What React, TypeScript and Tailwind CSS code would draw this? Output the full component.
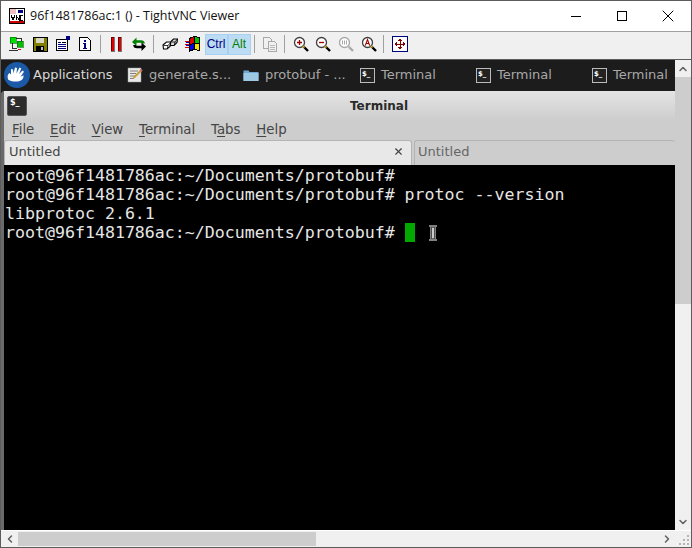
import { ReactNode } from "react";
import { ChevronDown, ChevronLeft, ChevronRight, ChevronUp, X } from "lucide-react";

// Icônes de la barre TightVNC, dessinées à la main sur une grille 16x16
function Svg({ children, className = "" }: { children: ReactNode; className?: string }) {
  return (
    <svg viewBox="0 0 16 16" className={`h-4 w-4 shrink-0 ${className}`} shapeRendering="crispEdges">
      {children}
    </svg>
  );
}

function IconConnections() {
  return (
    <Svg>
      <rect x="1" y="1" width="6" height="6" fill="#00e000" stroke="#006000" strokeWidth="0.6" />
      <rect x="8" y="5" width="6" height="6" fill="#00c000" stroke="#006000" strokeWidth="0.6" />
      <path d="M7 2h5v3M3 7v5h5M0 14h9" stroke="#000" strokeWidth="0.8" fill="none" />
      <rect x="9" y="13" width="3" height="1" fill="#e00000" />
    </Svg>
  );
}

function IconSave() {
  return (
    <Svg>
      <rect x="1" y="1" width="14" height="14" fill="#808000" stroke="#000" />
      <rect x="4" y="1.5" width="8" height="5" fill="#d8d8c0" />
      <rect x="4" y="10" width="8" height="5" fill="#000" />
      <rect x="9" y="11" width="2" height="3" fill="#c0c0c0" />
    </Svg>
  );
}

function IconOptions() {
  return (
    <Svg>
      <path d="M1.5 3.5h11v11h-11z" fill="#fff" stroke="#000" />
      <rect x="11" y="0" width="4" height="4" fill="#000080" />
      <path d="M3 6h3M3 8h8M3 10h8M3 12h8" stroke="#000080" />
      <path d="M7 6h4" stroke="#000" />
    </Svg>
  );
}

function IconInfo() {
  return (
    <Svg>
      <path d="M2.5 1.5h8l3 3v10h-11z" fill="#fff" stroke="#000" />
      <rect x="7" y="4" width="2" height="2" fill="#000080" />
      <path d="M6 7h3v5h1v1H6v-1h1V8H6z" fill="#000080" />
    </Svg>
  );
}

function IconPause() {
  return (
    <Svg>
      <rect x="3" y="1" width="3" height="14" fill="#e00000" stroke="#000" strokeWidth="0.5" />
      <rect x="10" y="1" width="3" height="14" fill="#e00000" stroke="#000" strokeWidth="0.5" />
    </Svg>
  );
}

function IconRefresh() {
  return (
    <svg viewBox="0 0 16 16" className="h-4 w-4 shrink-0">
      <path d="M1 6l4.500-4.500v2.700H10c2.500 0 3.800 1.300 3.800 3.300h-2.800c0-.6-.4-.8-1-.8H5.500v3.300z" fill="#008000" />
      <path d="M15 10.500l-4.500 4.500v-2.700H6c-2.500 0-3.800-1.300-3.800-3.300H5c0 .6.400.8 1 .8h4.500V6.500z" fill="#000" />
    </svg>
  );
}

function IconKeys() {
  return (
    <svg viewBox="0 0 16 16" className="h-4 w-4 shrink-0">
      <path d="M1 9l3.500-3h4.500l-1 4.500-3 2.500H1.500z" fill="#fff" stroke="#000" strokeWidth="1.100" />
      <path d="M1.500 9.500h4.500l3-3.500M6 9.500l-.7 3.500" fill="none" stroke="#000" strokeWidth="0.800" />
      <path d="M9 5.500l2.500-2.500h4l-.5 3.500-3 3H8.200z" fill="#d8d8d8" stroke="#000" strokeWidth="1.100" />
      <path d="M9.500 6h3.500l2.500-3M13 6l-.7 3.500" fill="none" stroke="#000" strokeWidth="0.800" />
    </svg>
  );
}

function IconWindows() {
  return (
    <Svg>
      <path d="M4 2l5-2 6 1v14l-6-1-5 2z" fill="#000" />
      <path d="M5 3l4-2v6l-4 1z" fill="#e00000" />
      <path d="M10 1l4 1v5l-4-.5z" fill="#00c000" />
      <path d="M5 9l4-1v5l-4 1z" fill="#0000e0" />
      <path d="M10 8l4 .5V14l-4-1z" fill="#f0e000" />
      <path d="M0 5h4M0 8h4M0 11h4" stroke="#e00000" />
      <path d="M1 6.500h3M1 9.500h3" stroke="#0000c0" />
    </Svg>
  );
}

function IconCopy() {
  return (
    <Svg>
      <path d="M1.500 1.500h6l2 2v9h-8z" fill="#f0f0f0" stroke="#a8a8a8" />
      <path d="M6.500 5.500h6l2 2v8h-8z" fill="#f0f0f0" stroke="#a8a8a8" />
      <path d="M8 9h5M8 11h5M8 13h5" stroke="#b8b8b8" />
    </Svg>
  );
}

function IconZoom({ kind }: { kind: "in" | "out" | "fit" | "auto" }) {
  const rim = kind === "fit" ? "#a8a8a8" : "#404040";
  return (
    <svg viewBox="0 0 16 16" className="h-4 w-4 shrink-0">
      <circle cx="6.500" cy="6.500" r="5" fill="#fff" stroke={rim} strokeWidth="1.300" />
      <path d="M10.500 10.500l4.500 4.500" stroke={kind === "fit" ? "#a8a8a8" : "#000"} strokeWidth="2.400" />
      <path d="M10 10l1.500 1.500" stroke={kind === "fit" ? "#c0c0c0" : "#e8c000"} strokeWidth="1.600" />
      {kind === "in" && <path d="M4 6.500h5M6.500 4v5" stroke="#a00000" strokeWidth="1.300" />}
      {kind === "out" && <path d="M4 6.500h5" stroke="#a00000" strokeWidth="1.300" />}
      {kind === "fit" && <path d="M4.500 4.500v4M6.500 4.500v4M8.500 4.500v4" stroke="#a8a8a8" strokeWidth="1" />}
      {kind === "auto" && <path d="M4.300 9.500L6.500 3.500l2.200 6M5 7.500h3" stroke="#a00000" strokeWidth="1.100" fill="none" />}
    </svg>
  );
}

function IconFullscreen() {
  return (
    <svg viewBox="0 0 16 16" className="h-4 w-4 shrink-0" shapeRendering="crispEdges">
      <rect x="0.500" y="0.500" width="15" height="15" fill="#fff" stroke="#000080" />
      <path d="M8 2l2 3H6zM8 14l-2-3h4zM2 8l3-2v4zM14 8l-3 2V6z" fill="#800000" />
      <path d="M7.500 5h1v6h-1zM5 7.500h6v1H5z" fill="#800000" />
    </svg>
  );
}

function IconVnc() {
  return (
    <svg viewBox="0 0 16 16" className="h-4 w-4 shrink-0" shapeRendering="crispEdges">
      <rect x="0.500" y="0.500" width="15" height="15" fill="#fff" stroke="#000" />
      <rect x="1" y="1" width="6" height="5" fill="#f0c0c0" />
      <rect x="9" y="2" width="5" height="3" fill="#000080" />
      <rect x="1" y="13" width="14" height="2" fill="#d00000" />
      <path d="M2 7l2 5 2-5M7 12V7l3 5V7M14 7h-3v5h3" stroke="#000" fill="none" strokeWidth="1" />
    </svg>
  );
}

function TermIcon({ size = "small" }: { size?: "small" | "large" }) {
  if (size === "large") {
    return (
      <span className="flex h-[20px] w-[20px] shrink-0 items-start rounded-[2px] border border-[#555] bg-[#2c2c2c] pl-[2px] text-[8px] leading-[12px] font-bold text-white">
        $_
      </span>
    );
  }
  return (
    <span className="ml-[1px] flex h-[15px] w-[15px] shrink-0 items-start border border-[#bbb] bg-[#222] pl-[1px] text-[7px] leading-[10px] font-bold text-white">
      $_
    </span>
  );
}

function IconEditor() {
  return (
    <svg viewBox="0 0 16 16" className="h-4 w-4 shrink-0">
      <rect x="1" y="1" width="13" height="14" fill="#e8e8e8" stroke="#999" strokeWidth="0.5" />
      <path d="M3 4h8M3 6.500h6M3 9h5M3 11.500h4" stroke="#666" strokeWidth="0.8" />
      <path d="M14 2l1.500 1.500L8 11l-2.500 1L6.500 9.500z" fill="#c8a040" />
      <path d="M14 2l1.500 1.500-1.300 1.300-1.500-1.500z" fill="#d06070" />
    </svg>
  );
}

function IconFolder() {
  return (
    <svg viewBox="0 0 16 16" className="h-4 w-4 shrink-0">
      <path d="M0.500 3.500h5l1 1.500h9v9h-15z" fill="#6fa8d0" />
      <path d="M0.500 6h15v8h-15z" fill="#9cc8e4" />
    </svg>
  );
}

function XfceLogo() {
  return (
    <svg viewBox="0 0 26 26" className="h-[26px] w-[26px] shrink-0">
      <circle cx="13" cy="13" r="13" fill="#1c5aa8" />
      <path d="M4 17c-1-3 0-5 1.500-6l1.500 1.500L7 7l2 .5.500 4 1.500-6 2 .5-.5 5.500 3-6 1.800 1-2.300 5.500 3.500-3.500 1.500 1.200-3.500 5 3-1.500c.5 3-2 6-6 6.300-4 .3-8-.5-9.500-2z" fill="#fff" />
    </svg>
  );
}

function ToolSep({ wide = false }: { wide?: boolean }) {
  return (
    <span
      className={`ml-[3px] h-[18px] w-px shrink-0 bg-[#a0a0a0] ${wide ? "mr-[5px]" : "mr-[4px]"}`}
    />
  );
}

function ToolBtn({ children }: { children: ReactNode }) {
  return <span className="flex h-[22px] w-[22.7px] shrink-0 items-center justify-center">{children}</span>;
}

function TaskItem({ icon, label, width }: { icon: ReactNode; label: string; width: string }) {
  return (
    <div className={`flex h-full items-center gap-[6px] pl-[6px] text-[#a8a8a8] ${width}`}>
      {icon}
      <span className="whitespace-nowrap">{label}</span>
    </div>
  );
}

function Mnemonic({ pre = "", u, post }: { pre?: string; u: string; post: string }) {
  return (
    <span>
      {pre}
      <span className="underline underline-offset-2">{u}</span>
      {post}
    </span>
  );
}

const lignes = [
  "root@96f1481786ac:~/Documents/protobuf#",
  "root@96f1481786ac:~/Documents/protobuf# protoc --version",
  "libprotoc 2.6.1",
];

export default function App() {
  return (
    <div className="flex h-[548px] w-[692px] flex-col overflow-hidden border-x border-t border-[#5c5c5c] bg-white font-['DejaVu_Sans',sans-serif]">
      {/* Barre de titre Windows */}
      <div className="flex h-[30px] shrink-0 items-center pl-[8px] font-['Open_Sans',sans-serif]">
        <IconVnc />
        <span className="ml-[5px] text-[12.500px] text-[#111]">96f1481786ac:1 () - TightVNC Viewer</span>
        <div className="ml-auto flex h-full items-center">
          <span className="flex h-full w-[46px] items-center justify-center">
            <span className="h-px w-[10px] bg-black" />
          </span>
          <span className="flex h-full w-[46px] items-center justify-center">
            <span className="h-[10px] w-[10px] border border-black" />
          </span>
          <span className="flex h-full w-[46px] items-center justify-center">
            <X size={20} strokeWidth={1.200} color="#000" />
          </span>
        </div>
      </div>

      {/* Barre d'outils */}
      <div className="flex h-[28px] shrink-0 items-center border-t border-[#a0a0a0] bg-[#f0f0f0] pb-[3px] pl-[5px]">
        <ToolBtn><IconConnections /></ToolBtn>
        <ToolBtn><IconSave /></ToolBtn>
        <ToolBtn><IconOptions /></ToolBtn>
        <ToolBtn><IconInfo /></ToolBtn>
        <ToolSep />
        <ToolBtn><IconPause /></ToolBtn>
        <ToolBtn><IconRefresh /></ToolBtn>
        <ToolSep wide />
        <ToolBtn><IconKeys /></ToolBtn>
        <ToolBtn><IconWindows /></ToolBtn>
        <span className="flex h-[21px] w-[23px] shrink-0 items-center justify-center border border-[#a8d0f0] bg-[#bcdcf4] font-['Liberation_Sans',sans-serif] text-[12px] text-[#000080]">Ctrl</span>
        <span className="flex h-[21px] w-[23px] shrink-0 items-center justify-center border border-[#a8d0f0] bg-[#bcdcf4] font-['Liberation_Sans',sans-serif] text-[12px] text-[#008000]">Alt</span>
        <ToolSep />
        <ToolBtn><IconCopy /></ToolBtn>
        <ToolSep />
        <ToolBtn><IconZoom kind="in" /></ToolBtn>
        <ToolBtn><IconZoom kind="out" /></ToolBtn>
        <ToolBtn><IconZoom kind="fit" /></ToolBtn>
        <ToolBtn><IconZoom kind="auto" /></ToolBtn>
        <ToolSep wide />
        <ToolBtn><IconFullscreen /></ToolBtn>
      </div>

      {/* Session distante */}
      <div className="flex min-h-0 flex-1 flex-col border-t border-[#5c5c5c]">
        <div className="flex min-h-0 flex-1">
          <div className="flex min-w-0 flex-1 flex-col bg-black">
            {/* Panneau Xfce */}
            <div className="flex h-[31px] shrink-0 items-center overflow-hidden bg-[#1c1c1c] pb-[1px] text-[13px]">
              <div className="flex h-full w-[120px] shrink-0 items-center gap-[3px] pl-[3px] text-[#d8d8d8]">
                <XfceLogo />
                <span>Applications</span>
              </div>
              <TaskItem icon={<IconEditor />} label="generate.s..." width="w-[116px] shrink-0" />
              <TaskItem icon={<IconFolder />} label="protobuf - ..." width="w-[116px] shrink-0" />
              <TaskItem icon={<TermIcon />} label="Terminal" width="w-[116px] shrink-0" />
              <TaskItem icon={<TermIcon />} label="Terminal" width="w-[116px] shrink-0" />
              <TaskItem icon={<TermIcon />} label="Terminal" width="w-[90px] shrink-0" />
            </div>

            {/* Fenêtre Terminal */}
            <div className="flex min-h-0 flex-1 flex-col rounded-t-[3px] border-l-[3px] border-[#6a6a6a] bg-[#cdcdcd]">
              <div className="flex h-[30px] shrink-0 items-center bg-gradient-to-b from-[#e4e4e4] to-[#cdcdcd] pl-[3px]">
                <TermIcon size="large" />
                <span className="ml-[323px] text-[12px] font-bold text-[#2a2a2a]">Terminal</span>
              </div>
              <div className="flex h-[19px] shrink-0 items-center gap-[15.800px] pb-[1px] pl-[8px] text-[13.300px] text-[#444]">
                <Mnemonic u="F" post="ile" />
                <Mnemonic u="E" post="dit" />
                <Mnemonic u="V" post="iew" />
                <Mnemonic u="T" post="erminal" />
                <Mnemonic pre="T" u="a" post="bs" />
                <Mnemonic u="H" post="elp" />
              </div>
              <div className="flex h-[25px] shrink-0 text-[13px]">
                <div className="flex w-[408px] shrink-0 items-center justify-between rounded-t-[3px] border border-b-0 border-[#b4b4b4] bg-[#e8e8e8] pr-[7px] pb-[3px] pl-[4px] text-[#444]">
                  <span>Untitled</span>
                  <X size={11} strokeWidth={2.500} color="#444" />
                </div>
                <div className="ml-[2px] flex flex-1 items-center rounded-t-[3px] border-t border-l border-[#b4b4b4] pb-[3px] pl-[3px] text-[#666]">
                  Untitled
                </div>
              </div>

              {/* Sortie du terminal */}
              <div className="relative min-h-0 flex-1 bg-black pt-[1px] pl-[1px] font-['DejaVu_Sans_Mono',monospace] text-[16.600px] leading-[19px] whitespace-pre text-[#e6e6e6]">
                {lignes.map((l) => (
                  <div key={l}>{l}</div>
                ))}
                <div className="flex items-center">
                  <span>root@96f1481786ac:~/Documents/protobuf# </span>
                  <span className="h-[19px] w-[10px] bg-[#00a800]" />
                </div>
                {/* Curseur texte */}
                <svg viewBox="0 0 10 16" className="absolute top-[60px] left-[424px] h-[16px] w-[10px] overflow-visible">
                  <path d="M1.500 1h7M1.500 15h7" fill="none" stroke="#fff" strokeWidth="2" />
                  <path d="M5 1v14" fill="none" stroke="#fff" strokeWidth="5" />
                  <path d="M2 1h6M2 15h6" fill="none" stroke="#000" strokeWidth="1" />
                  <path d="M5 2v12" fill="none" stroke="#000" strokeWidth="3.400" />
                  <path d="M5 2.500v11" fill="none" stroke="#fff" strokeWidth="1.600" />
                </svg>
              </div>
            </div>
          </div>

          {/* Ascenseur vertical */}
          <div className="flex w-[16px] shrink-0 flex-col bg-[#f0f0f0]">
            <span className="flex h-[17px] items-center justify-center">
              <ChevronUp size={12} strokeWidth={3} color="#606060" />
            </span>
            <span className="h-[227px] bg-[#cdcdcd]" />
            <span className="flex-1" />
            <span className="flex h-[17px] items-center justify-center">
              <ChevronDown size={12} strokeWidth={3} color="#606060" />
            </span>
          </div>
        </div>

        {/* Ascenseur horizontal */}
        <div className="flex h-[17px] shrink-0 items-stretch border-t border-white bg-[#f0f0f0]">
          <span className="flex w-[17px] items-center justify-center">
            <ChevronLeft size={12} strokeWidth={3} color="#606060" />
          </span>
          <span className="my-[1px] w-[298px] bg-[#cdcdcd]" />
          <span className="flex-1" />
          <span className="flex w-[17px] items-center justify-center">
            <ChevronRight size={12} strokeWidth={3} color="#606060" />
          </span>
          {/* Poignée de redimensionnement */}
          <span className="flex w-[16px] items-end justify-end">
            <svg viewBox="0 0 12 12" className="mb-[1px] h-[12px] w-[12px]" shapeRendering="crispEdges">
              <path d="M8 1h2v2H8zM4 5h2v2H4zM8 5h2v2H8zM0 9h2v2H0zM4 9h2v2H4zM8 9h2v2H8z" fill="#b4b4b4" />
            </svg>
          </span>
        </div>
      </div>
      <div className="h-px shrink-0 bg-[#5c5c5c]" />
    </div>
  );
}
